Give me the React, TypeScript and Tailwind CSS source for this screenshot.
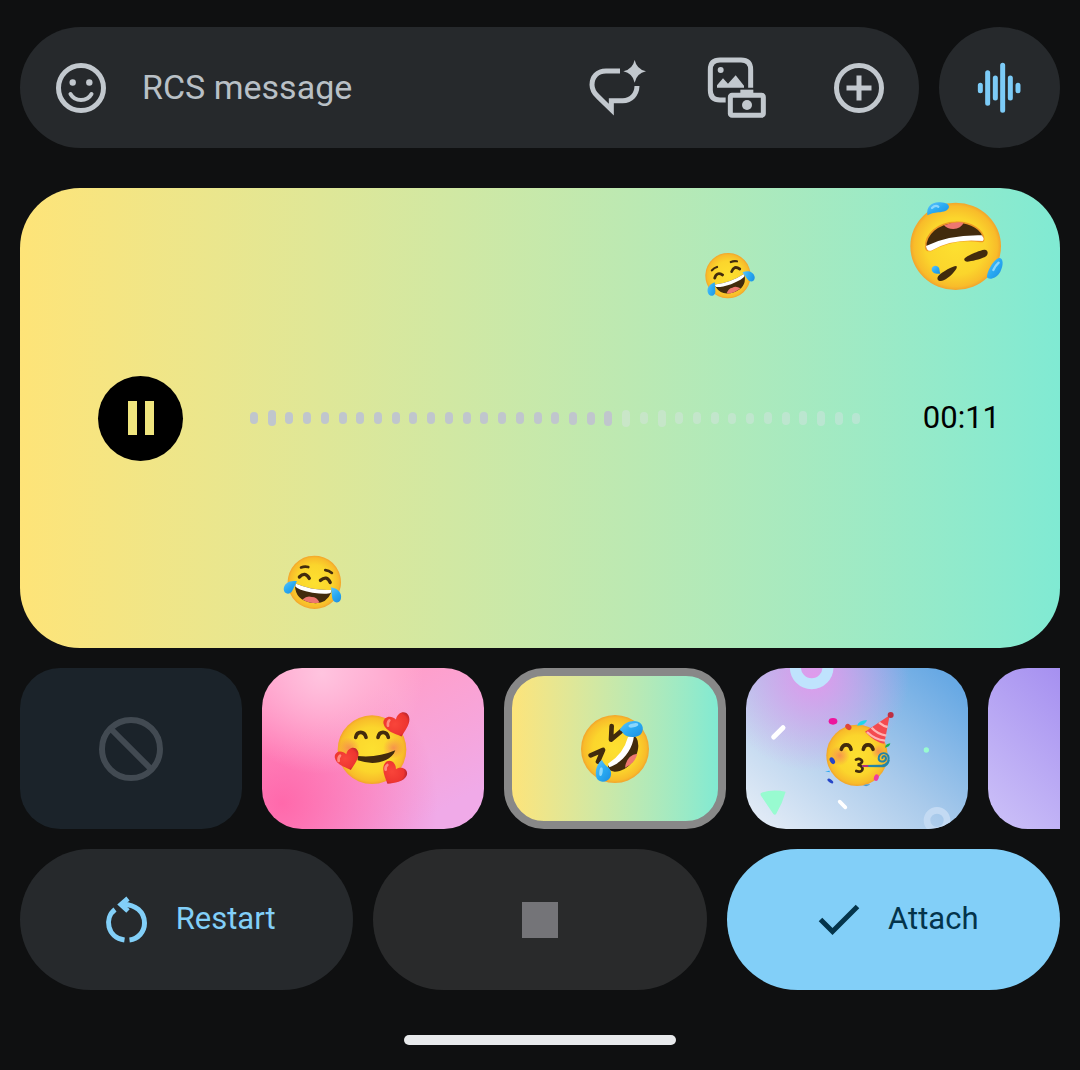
import React, { useState } from 'react';

const WAVE = [
  12, 16, 12, 12, 12, 12, 12, 12, 12, 12, 12, 12, 12, 12, 12, 12, 12, 12, 13, 13, 15, 17, 12, 17, 12, 12, 12, 11, 11,
  12, 13, 14, 15, 13, 11,
];
const PLAYED = 21;

const HEART = 'M0 34 C-16 20 -38 6 -36 -14 C-34 -32 -10 -34 0 -15 C10 -34 34 -32 36 -14 C38 6 16 20 0 34 Z';

const FaceGradients = () => (
  <svg className="absolute size-0" aria-hidden="true">
    <defs>
      <radialGradient id="face" cx="0.5" cy="0.5" r="0.5">
        <stop offset="0" stopColor="#fde030" />
        <stop offset="0.65" stopColor="#fbd52c" />
        <stop offset="0.92" stopColor="#f8bc2a" />
        <stop offset="1" stopColor="#f2a42c" />
      </radialGradient>
      <linearGradient id="tear" x1="0" y1="0" x2="1" y2="1">
        <stop offset="0" stopColor="#5fc4fb" />
        <stop offset="0.5" stopColor="#29aaf2" />
        <stop offset="1" stopColor="#1e8de0" />
      </linearGradient>
      <radialGradient id="blush">
        <stop offset="0" stopColor="#f4705c" stopOpacity="0.65" />
        <stop offset="1" stopColor="#f4705c" stopOpacity="0" />
      </radialGradient>
      <radialGradient id="heart" cx="0.4" cy="0.4" r="0.65">
        <stop offset="0" stopColor="#f9453a" />
        <stop offset="0.75" stopColor="#ee3530" />
        <stop offset="1" stopColor="#b3202b" />
      </radialGradient>
    </defs>
  </svg>
);

// Upright joy face centred on 0,0 with a radius of 80
const JoyFace = ({ transform }: { transform: string }) => (
  <g transform={transform}>
    <circle r="80" fill="url(#face)" />
    <g fill="none" stroke="#422b0d" strokeWidth="10" strokeLinecap="round">
      <path d="M-47 -8 Q-33 -28 -17 -9" />
      <path d="M17 -9 Q33 -28 47 -8" />
      <path d="M-47 -37 Q-37 -43 -26 -42" strokeWidth="8" />
      <path d="M26 -42 Q37 -43 47 -37" strokeWidth="8" />
    </g>
    <path d="M-53 14 Q0 26 53 14 Q56 14 55 22 Q46 62 0 62 Q-46 62 -55 22 Q-56 14 -53 14 Z" fill="#422b0d" />
    <path d="M-53 14 Q0 26 53 14 Q56 14 54 22 Q46 30 0 32 Q-46 30 -54 22 Q-56 14 -53 14 Z" fill="#fff" />
    <path d="M-26 57 Q-14 42 0 45 Q14 42 26 57 Q14 62 0 62 Q-14 62 -26 57 Z" fill="#ed7770" />
    <path d="M-52 6 C-74 6 -89 18 -87 36 C-84 52 -64 52 -60 34 Q-57 24 -52 6 Z" fill="url(#tear)" />
    <path d="M52 6 C74 6 89 18 87 36 C84 52 64 52 60 34 Q57 24 52 6 Z" fill="url(#tear)" />
  </g>
);

const TumblingFace = () => (
  <svg viewBox="650 30 300 276" width="100" height="92" aria-hidden="true">
    <ellipse cx="796" cy="169" rx="136" ry="131" fill="url(#face)" />
    <path d="M711 74 C708 52 722 37 745 37 C760 37 776 40 776 51 C774 62 760 66 744 67 Q724 69 711 76 Z" fill="url(#tear)" />
    <path d="M725 54 Q735 44 744 50" stroke="#8ad6fc" strokeWidth="7" strokeLinecap="round" fill="none" />
    <path
      d="M706 172 C704 134 742 98 796 97 C842 95 880 120 880 148 Q880 156 870 154 Q790 142 722 181 Q706 184 706 172 Z"
      fill="#422b0d"
      stroke="#f09a25"
      strokeWidth="5"
    />
    <path d="M707 168 Q775 134 874 136 Q884 147 877 153 Q785 144 722 182 Q709 185 707 168 Z" fill="#fff" />
    <path d="M761 106 Q792 94 820 98 Q812 116 789 117 Q770 117 761 106 Z" fill="#ed7770" />
    <path d="M822 206 C832 196 864 182 882 179 C894 178 896 194 884 201 C868 208 844 214 830 215 Q820 214 822 206 Z" fill="#422b0d" />
    <path d="M797 228 C788 228 756 245 744 258 C736 270 748 277 760 271 C776 264 796 243 799 234 Q801 228 797 228 Z" fill="#422b0d" />
    <path d="M724 238 C724 226 742 223 747 236 Q748 246 750 251 C738 253 724 250 724 238 Z" fill="url(#tear)" />
    <path d="M925 204 C940 202 940 226 930 245 C920 265 894 272 890 261 C889 249 905 213 925 204 Z" fill="url(#tear)" />
    <path d="M925 218 Q914 228 909 240" stroke="#8ad6fc" strokeWidth="7" strokeLinecap="round" fill="none" />
  </svg>
);

const LoveEmoji = () => (
  <svg viewBox="1005 162 234 234" width="78" height="78" aria-hidden="true">
    <circle cx="1119" cy="281" r="103" fill="url(#face)" />
    <circle cx="1050" cy="276" r="32" fill="url(#blush)" />
    <circle cx="1184" cy="276" r="32" fill="url(#blush)" />
    <g fill="none" stroke="#422b0d" strokeLinecap="round">
      <path d="M1070 244 C1074 224 1096 224 1101 244" strokeWidth="11" />
      <path d="M1137 244 C1141 224 1163 224 1168 244" strokeWidth="11" />
    </g>
    <path d="M1076 300 Q1136 306 1189 283 C1180 310 1146 321 1120 321 Q1096 320 1076 313 Z" fill="#422b0d" />
    <g fill="url(#heart)">
      <path d={HEART} transform="translate(1196 206) rotate(-18) scale(1.1)" />
      <path d={HEART} transform="translate(1046 309) rotate(-16) scale(1)" />
      <path d={HEART} transform="translate(1183 353) rotate(30) scale(1.04)" />
    </g>
    <g fill="none" stroke="#ff8a80" strokeWidth="8" strokeLinecap="round">
      <path d="M1167 209 Q1165 199 1171 193" />
      <path d="M1019 315 Q1017 304 1023 299" />
      <path d="M1160 341 Q1158 332 1165 327" />
    </g>
  </svg>
);

const RoflEmoji = () => (
  <svg viewBox="267 174 216 216" width="72" height="72" aria-hidden="true">
    <circle cx="375" cy="282" r="102" fill="url(#face)" />
    <g fill="none" stroke="#422b0d" strokeWidth="14" strokeLinecap="round" strokeLinejoin="round">
      <path d="M365 213 L363 254 L395 227" />
      <path d="M302 301 L339 285 L324 320" />
    </g>
    <path d="M422 244 Q444 238 445 272 C444 310 412 350 374 350 Q354 348 354 333 Q408 302 422 244 Z" fill="#422b0d" />
    <path d="M414 246 L432 242 C428 284 396 324 358 337 L354 326 Q400 298 414 246 Z" fill="#fff" />
    <path d="M442 296 Q410 300 405 338 Q434 326 442 296 Z" fill="#ed7770" />
    <path d="M389 225 C400 204 424 194 444 200 C462 207 462 228 451 239 C436 250 410 247 401 237 Q396 228 389 225 Z" fill="url(#tear)" />
    <path d="M336 315 C318 326 312 358 322 373 C332 385 353 382 361 367 C367 352 360 338 352 335 Q342 328 336 315 Z" fill="url(#tear)" />
    <ellipse cx="430" cy="211" rx="15" ry="6" fill="#8ad6fc" transform="rotate(-12 430 211)" />
    <ellipse cx="333" cy="350" rx="5" ry="13" fill="#8ad6fc" transform="rotate(8 333 350)" />
  </svg>
);

const PartyScene = () => (
  <svg viewBox="33 39 666 483" width="222" height="161" aria-hidden="true">
    <circle cx="230" cy="37" r="49" fill="none" stroke="#bfe3fd" strokeWidth="33" />
    <circle cx="606" cy="496" r="30" fill="none" stroke="#c3daf3" strokeWidth="20" />
    <path d="M80 413 Q112 402 152 410 Q142 446 123 478 Q117 482 113 474 L78 422 Q74 415 80 413 Z" fill="#98fbd0" />
    <circle cx="574" cy="285" r="8" fill="#98fbd0" />
    <g stroke="#fff" strokeLinecap="round">
      <path d="M116 246 L144 218" strokeWidth="15" />
      <path d="M314 440 L331 457" strokeWidth="11" />
    </g>

    <circle cx="366" cy="301" r="92" fill="url(#face)" />
    <circle cx="314" cy="302" r="30" fill="url(#blush)" />
    <circle cx="430" cy="290" r="22" fill="url(#blush)" />
    <g fill="none" stroke="#422b0d" strokeLinecap="round">
      <path d="M319 283 C324 265 344 265 348 283" strokeWidth="11" />
      <path d="M385 283 C389 265 409 265 414 283" strokeWidth="11" />
      <path d="M363 314 C375 308 384 316 380 323 Q377 328 368 329 C381 332 386 341 380 347 Q374 352 364 348" strokeWidth="8" />
    </g>
    <path d="M382 330 L440 329 Q456 326 460 312 L464 316 Q462 332 446 337 L382 336 Z" fill="#2484a5" />
    <path d="M382 330 L400 330 V336 H382 Z" fill="#b52b7c" />
    <path
      d="M460 318 C466 292 438 288 432 304 C426 324 452 324 453 310 C451 298 439 304 443 311"
      fill="none"
      stroke="#2484a5"
      strokeWidth="6"
    />
    <path d="M390 230 L464 181 L448 266 Q420 262 390 230 Z" fill="#f44a50" />
    <g stroke="#ffb3b3" strokeWidth="7" fill="none">
      <path d="M410 218 Q426 236 454 242" />
      <path d="M432 203 Q446 214 458 216" />
      <path d="M396 231 Q420 254 450 257" />
    </g>
    <circle cx="467" cy="180" r="9" fill="#bd2f43" />
    <ellipse cx="294" cy="199" rx="13" ry="10" fill="#ed149d" />
    <ellipse cx="340" cy="216" rx="10" ry="8" fill="#df4638" transform="rotate(40 340 216)" />
    <path d="M366 212 Q372 196 396 195 Q392 212 366 212 Z" fill="#20d5ec" />
    <path d="M450 278 Q452 266 466 265 Q464 276 450 278 Z" fill="#18b052" />
    <ellipse cx="292" cy="317" rx="11" ry="7" fill="#2646c8" transform="rotate(60 292 317)" />
    <ellipse cx="286" cy="378" rx="10" ry="5" fill="#2646c8" transform="rotate(35 286 378)" />
    <ellipse cx="424" cy="368" rx="7" ry="10" fill="#f03d9e" transform="rotate(20 424 368)" />
    <path d="M270 349 L284 347 V352 Z" fill="#29aaf2" />
    <path d="M384 391 Q396 386 406 388 Q396 397 384 391 Z" fill="#4e9bd0" />
  </svg>
);

const NoneIcon = () => (
  <svg viewBox="0 0 64 64" width="64" height="64" fill="none" stroke="#424a52" strokeWidth="6" aria-hidden="true">
    <circle cx="32" cy="32" r="29" />
    <path d="M12 12 L52 52" />
  </svg>
);

const moods = [
  { name: 'No effect', bg: 'bg-[#1b232a]', art: <NoneIcon /> },
  {
    name: 'Love',
    bg: 'bg-[radial-gradient(circle_at_60px_5px,#ffc4df_0%,#ffc4df00_45%),radial-gradient(circle_at_20px_135px,#ff69ab_0%,#ff69ab00_64%),linear-gradient(150deg,#ff9fca_30%,#f0aae8_85%)]',
    art: <LoveEmoji />,
  },
  { name: 'Laughing', bg: 'bg-linear-to-r from-[#fde47a] to-[#81ead2]', art: <RoflEmoji /> },
  {
    name: 'Party',
    bg: 'bg-[radial-gradient(circle_at_68px_8px,#e09aec_0%,#e09aec00_44%),linear-gradient(40deg,#e2ebf6_5%,#a9caeb_50%,#68a9e4_92%)]',
    art: <PartyScene />,
  },
  { name: 'Purple', bg: 'bg-[linear-gradient(45deg,#cdc2f8_0%,#a58ff0_62%)]', art: null },
];

const App = () => {
  const [message, setMessage] = useState('');
  const [selected, setSelected] = useState('Laughing');

  return (
    <div className="min-h-screen bg-[#0f1011] px-5 pt-[27px] pb-[25px] font-[Roboto,sans-serif]">
      <FaceGradients />

      <div className="flex gap-5">
        <div className="flex h-[121px] min-w-0 flex-1 items-center rounded-full bg-[#26292c] pr-[34px] pl-9 text-[#c2c8ce]">
          <button type="button" aria-label="Emoji" className="shrink-0">
            <svg viewBox="0 0 50 50" width="50" height="50" fill="none" stroke="currentColor" aria-hidden="true">
              <circle cx="25" cy="25" r="22.5" strokeWidth="5" />
              <circle cx="16.7" cy="19.5" r="3.2" fill="currentColor" stroke="none" />
              <circle cx="33.3" cy="19.5" r="3.2" fill="currentColor" stroke="none" />
              <path d="M14.5 31 C19 39 31 39 35.5 31" strokeWidth="4" strokeLinecap="round" />
            </svg>
          </button>
          <input
            type="text"
            aria-label="RCS message"
            placeholder="RCS message"
            value={message}
            onChange={(e) => setMessage(e.target.value)}
            className="ml-8 min-w-0 flex-1 bg-transparent pl-1 text-[34px] outline-none placeholder:text-[#b9c0c6]"
          />
          <div className="flex shrink-0 items-center gap-15">
            <button type="button" aria-label="Magic compose">
              <svg viewBox="51 52 180 180" width="60" height="60" aria-hidden="true">
                <path
                  d="M150 91 H108 C81 91 66 110 66 132 C66 147 72 157 84 168 L124 207 V180 H158 C184 180 200 161 201 136"
                  fill="none"
                  stroke="currentColor"
                  strokeWidth="15"
                />
                <path d="M194 58 Q200 86 228 92 Q200 98 194 126 Q188 98 160 92 Q188 86 194 58 Z" fill="currentColor" />
              </svg>
            </button>
            <button type="button" aria-label="Gallery and camera">
              <svg viewBox="411 52 198 186" width="66" height="62" aria-hidden="true">
                <g fill="none" stroke="currentColor" strokeWidth="15">
                  <path d="M467 181 H450 Q421 181 421 152 V90 Q421 61 450 61 H513 Q542 61 542 90 V144" />
                  <rect x="481" y="167" width="99" height="60" rx="5" />
                </g>
                <circle cx="452" cy="91" r="9" fill="currentColor" />
                <path d="M441 144 V137 L459 116 L474 132 L497 107 L522 138 V144 Z" fill="currentColor" />
                <path d="M511 164 V150 H550 V164 Z" fill="currentColor" />
                <circle cx="531" cy="196" r="15" fill="currentColor" />
              </svg>
            </button>
            <button type="button" aria-label="More options">
              <svg viewBox="0 0 52 52" width="52" height="52" fill="none" stroke="currentColor" strokeWidth="5" aria-hidden="true">
                <circle cx="26" cy="26" r="22.5" />
                <path d="M26 13.5 V38.5 M13.5 26 H38.5" />
              </svg>
            </button>
          </div>
        </div>
        <button
          type="button"
          aria-label="Voice message"
          className="flex size-[121px] shrink-0 items-center justify-center rounded-full bg-[#26292c]"
        >
          <svg viewBox="134 123 150 162" width="50" height="54" stroke="#7ccbf7" strokeWidth="15" strokeLinecap="round" aria-hidden="true">
            <path d="M150 196 V212 M172 158 V250 M195 174 V234 M217 136 V271 M240 174 V234 M263 196 V212" />
          </svg>
        </button>
      </div>

      <div className="relative mt-10 flex h-[460px] items-center rounded-[60px] bg-linear-to-r from-[#fee478] to-[#80ead3] pr-[60px] pl-[78px]">
        <button type="button" aria-label="Pause" className="flex size-[85px] shrink-0 items-center justify-center gap-2 rounded-full bg-black">
          <span className="h-[34px] w-[9px] bg-[#efe57e]" />
          <span className="h-[34px] w-[9px] bg-[#efe57e]" />
        </button>
        <div className="mr-[62px] ml-[67px] flex flex-1 items-center justify-between">
          {WAVE.map((height, i) => (
            <span
              key={i}
              className={`w-2 rounded-full ${i < PLAYED ? 'bg-[#c0c6cd]' : 'bg-[#dde0e8]/40'}`}
              style={{ height }}
            />
          ))}
        </div>
        <time className="text-[31px] text-black">00:11</time>

        <div className="absolute top-3 right-[53px]">
          <TumblingFace />
        </div>
        <div className="absolute top-[63px] right-[305px]">
          <svg viewBox="39 183 156 147" width="52" height="49" aria-hidden="true">
            <JoyFace transform="translate(114 257) rotate(-20) scale(0.85)" />
          </svg>
        </div>
        <div className="absolute bottom-[38px] left-[262px]">
          <svg viewBox="36 42 186 168" width="62" height="56" aria-hidden="true">
            <JoyFace transform="translate(133 127) rotate(10)" />
          </svg>
        </div>
      </div>

      <div className="mt-5 flex gap-5 overflow-hidden">
        {moods.map(({ name, bg, art }) => (
          <button
            key={name}
            type="button"
            aria-label={name}
            aria-pressed={selected === name}
            onClick={() => setSelected(name)}
            className={`flex h-[161px] w-[222px] shrink-0 items-center justify-center overflow-hidden rounded-[40px] ${
              selected === name ? 'border-8 border-[#888888] bg-origin-padding' : ''
            } ${bg}`}
          >
            {art}
          </button>
        ))}
      </div>

      <div className="mt-5 grid grid-cols-3 gap-5 text-[31px]">
        <button type="button" className="flex h-[141px] items-center justify-center gap-6 rounded-full bg-[#26292c] text-[#82cff8]">
          <svg viewBox="98 894 54 51" width="54" height="51" fill="none" stroke="currentColor" strokeWidth="5" aria-hidden="true">
            <path d="M115 909.5 C104 918 107 937.5 124.5 940" />
            <path d="M121 904.5 C136 903.5 144.5 912.5 144.5 923 C144.5 932 138 939 129.5 940" />
            <path d="M128 898.5 L121 904.5 L128 911" />
          </svg>
          Restart
        </button>
        <button type="button" aria-label="Stop" className="flex h-[141px] items-center justify-center rounded-full bg-[#292a2b]">
          <span className="size-9 bg-[#747478]" />
        </button>
        <button type="button" className="flex h-[141px] items-center justify-center gap-6 rounded-full bg-[#82cff8] text-[#04344b]">
          <svg viewBox="808 900 56 40" width="56" height="40" fill="none" stroke="currentColor" strokeWidth="5" aria-hidden="true">
            <path d="M820.5 919.5 L832.5 931.5 L857.5 906.5" />
          </svg>
          Attach
        </button>
      </div>

      <div className="mx-auto mt-[45px] h-2.5 w-[272px] rounded-full bg-[#e8eaec]" />
    </div>
  );
};

export default App;
